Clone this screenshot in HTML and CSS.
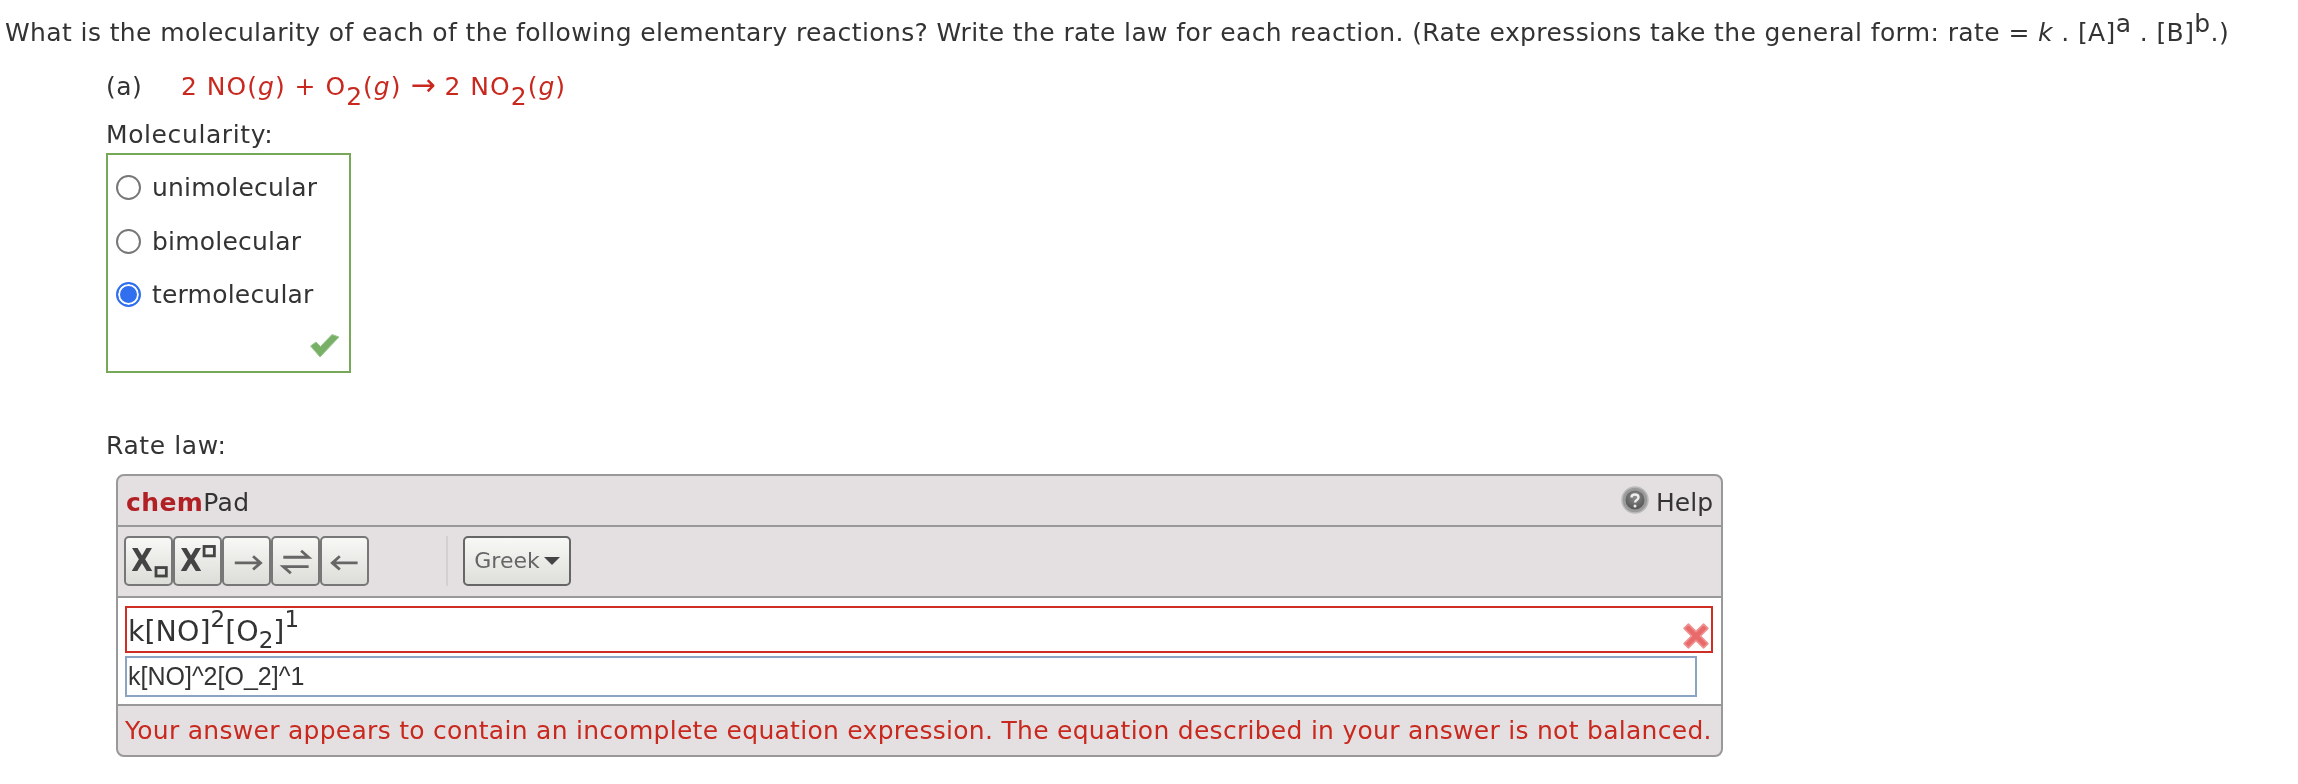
FILE: index.html
```
<!DOCTYPE html>
<html lang="en">
<head>
<meta charset="utf-8">
<title>Molecularity question</title>
<link rel="stylesheet" href="styles.css">
</head>
<body>
<p class="question">What is the molecularity of each of the following elementary reactions? Write the rate law for each reaction. (Rate expressions take the general form: <span class="formula">rate = <i>k</i> . [A]<sup>a</sup> . [B]<sup>b</sup>.)</span></p>
<div class="part">
  <p class="reaction"><span class="part-label">(a)</span><span class="eq">2 NO(<i>g</i>) + O<sub>2</sub>(<i>g</i>) <span class="arrow">→</span> 2 NO<sub>2</sub>(<i>g</i>)</span></p>
  <p class="label mol">Molecularity:</p>
  <div class="choices">
    <div class="choice"><span class="radio"></span>unimolecular</div>
    <div class="choice"><span class="radio"></span>bimolecular</div>
    <div class="choice"><span class="radio on"></span>termolecular</div>
    <svg class="check" viewBox="0 0 30 24" width="30" height="24"><path d="M0.500 12 L6 8 L10.500 12.500 L22 0.500 L29 3 L10 23 Z" fill="#78b068" stroke="#9cc890" stroke-width="1" stroke-linejoin="round"/></svg>
  </div>
  <p class="label rate">Rate law:</p>
  <div class="pad">
    <div class="pad-head">
      <span class="brand"><b>chem</b>Pad</span>
      <span class="help">
        <svg viewBox="0 0 28 28" width="28" height="28"><defs><radialGradient id="helpFill" cx="50%" cy="35%" r="65%"><stop offset="0" stop-color="#8c8c8c"/><stop offset="1" stop-color="#555"/></radialGradient></defs><circle cx="14" cy="14" r="13" fill="#9a9a9a" stroke="#bbb" stroke-width="1.500"/><circle cx="14" cy="14" r="9.500" fill="url(#helpFill)"/><path d="M10.500 11.500 C10.500 7.500 17.500 7.500 17.500 11.500 C17.500 14 14 14 14 16.500" fill="none" stroke="#eee" stroke-width="2.400"/><circle cx="14" cy="20" r="1.500" fill="#eee"/></svg>
        <span class="help-text">Help</span>
      </span>
    </div>
    <div class="pad-tools">
      <div class="btn-group">
        <button class="tool"><svg viewBox="0 0 48 48" width="48" height="48"><text x="5.500" y="35" textLength="23" lengthAdjust="spacingAndGlyphs" class="tool-x">X</text><rect x="32" y="31" width="11" height="9" class="tool-box"/></svg></button>
        <button class="tool"><svg viewBox="0 0 48 48" width="48" height="48"><text x="5.500" y="35" textLength="23" lengthAdjust="spacingAndGlyphs" class="tool-x">X</text><rect x="31" y="8.500" width="11" height="10" class="tool-box"/></svg></button>
        <button class="tool"><svg viewBox="0 0 48 48" width="48" height="48"><path d="M11.500 26 H39 M31 19 L39 26 L31 33" class="tool-line"/></svg></button>
        <button class="tool"><svg viewBox="0 0 48 48" width="48" height="48"><path d="M11 20 H38 L30 13 M38 30 H11 L19 37" class="tool-line"/></svg></button>
        <button class="tool"><svg viewBox="0 0 48 48" width="48" height="48"><path d="M38 26 H11 M19 19 L11 26 L19 33" class="tool-line"/></svg></button>
      </div>
      <span class="sep"></span>
      <button class="greek">Greek<span class="caret"></span></button>
    </div>
    <div class="pad-body">
      <div class="math-row">k[NO]<sup>2</sup>[O<sub>2</sub>]<sup>1</sup>
        <svg class="cross" viewBox="1 1 24 24" width="26" height="26"><path d="M6 2 L13 9 L20 2 L24 6 L17 13 L24 20 L20 24 L13 17 L6 24 L2 20 L9 13 L2 6 Z" fill="#e86a6a" stroke="#f09090" stroke-width="1.500" stroke-linejoin="round"/></svg>
      </div>
      <div class="raw-row">k[NO]^2[O_2]^1</div>
    </div>
    <div class="pad-status">Your answer appears to contain an incomplete equation expression. The equation described in your answer is not balanced.</div>
  </div>
</div>
</body>
</html>
```
FILE: styles.css
```
* { box-sizing: border-box; }
html, body { margin: 0; padding: 0; background: #fff; }
body {
  width: 2298px;
  height: 784px;
  overflow: hidden;
  font-family: "DejaVu Sans", Verdana, sans-serif;
  font-size: 25px;
  color: #333;
  padding: 18px 0 0 5px;
  filter: blur(0.4px);
}
p { margin: 0; }
sup, sub { font-size: 25px; line-height: 0; }
.question { line-height: 30px; white-space: nowrap; height: 30px; letter-spacing: 0.39px; }
.question sup { position: relative; top: 0; vertical-align: super; }
.part { margin: 23px 0 0 101px; }
.reaction { height: 32px; line-height: 32px; white-space: nowrap; }
.part-label { display: inline-block; width: 75px; letter-spacing: 0.5px; }
.eq { color: #c8281e; letter-spacing: 1px; }
.eq sub { vertical-align: -10px; }
.arrow { font-size: 30px; letter-spacing: 0; line-height: 0; }
.label { height: 32px; line-height: 32px; margin-top: 16px; }
.mol { letter-spacing: 0.6px; }
.choices {
  position: relative;
  width: 245px;
  height: 220px;
  margin-top: 2px;
  border: 2px solid #77a858;
  padding: 6px 0 0 8px;
  letter-spacing: 0.2px;
}
.choice { display: flex; align-items: center; height: 53.500px; gap: 11px; }
.radio {
  width: 25px;
  height: 25px;
  border-radius: 50%;
  border: 2px solid #777;
  background: #fff;
  flex: none;
}
.radio.on {
  border-color: #2f6ff0;
  background: #2f6ff0;
  box-shadow: inset 0 0 0 2px #fff;
}
.check { position: absolute; right: 9px; bottom: 13px; }
.rate { margin-top: 57px; letter-spacing: 0.6px; }
.pad {
  width: 1607px;
  height: 283px;
  margin: 12px 0 0 10px;
  border: 2px solid #999;
  border-radius: 8px;
  overflow: hidden;
  background: #e4e0e1;
  display: flex;
  flex-direction: column;
}
.pad-head {
  height: 51px;
  border-bottom: 2px solid #999;
  display: flex;
  align-items: center;
  justify-content: space-between;
  padding: 3px 8px 0 8px;
}
.brand { letter-spacing: 0.4px; }
.brand b { color: #b02024; }
.help { display: flex; align-items: center; gap: 7px; }
.help svg { margin-top: -4px; }
.pad-tools {
  height: 71px;
  border-bottom: 2px solid #999;
  display: flex;
  align-items: center;
  padding: 0 0 2px 6px;
}
.btn-group { display: flex; }
.tool {
  width: 49px;
  height: 50px;
  padding: 0;
  border: 2px solid #777;
  border-radius: 5px;
  background: linear-gradient(#f8f8f6, #dcdcd8);
  display: flex;
  align-items: center;
  justify-content: center;
}
.tool-x { font-family: "DejaVu Sans", sans-serif; font-weight: 700; font-size: 34px; fill: #444; }
.tool-box { fill: none; stroke: #444; stroke-width: 3px; }
.tool-line { fill: none; stroke: #666; stroke-width: 3px; }
.sep { width: 2px; height: 50px; background: #d4d0d1; margin: 0 15px 0 77px; }
.greek {
  width: 108px;
  height: 50px;
  padding: 0;
  border: 2px solid #666;
  border-radius: 5px;
  background: linear-gradient(#f8f8f6, #dededa);
  display: flex;
  align-items: center;
  justify-content: center;
  gap: 4px;
  font-family: "DejaVu Sans", sans-serif;
  font-size: 22px;
  color: #666;
}
.caret {
  width: 0;
  height: 0;
  border-left: 8px solid transparent;
  border-right: 8px solid transparent;
  border-top: 8px solid #444;
}
.pad-body { background: #fff; height: 108px; padding: 8px 0 0 7px; border-bottom: 2px solid #999; }
.math-row {
  position: relative;
  width: 1588px;
  height: 47px;
  border: 2px solid #cf2e24;
  padding-left: 1px;
  font-size: 28.500px;
  line-height: 47px;
  white-space: nowrap;
}
.math-row sup { font-size: 23px; vertical-align: 14px; }
.math-row sub { font-size: 23px; vertical-align: -7px; }
.cross { position: absolute; right: 2px; bottom: 2px; }
.raw-row {
  width: 1572px;
  height: 41px;
  margin-top: 3px;
  border: 2px solid #8aa4c2;
  font-family: "Liberation Sans", Arial, sans-serif;
  font-size: 25px;
  line-height: 37px;
  padding-left: 1px;
  white-space: nowrap;
}
.pad-status { color: #c8281e; padding: 0 0 0 7px; line-height: 49px; white-space: nowrap; letter-spacing: 0.28px; }
```
